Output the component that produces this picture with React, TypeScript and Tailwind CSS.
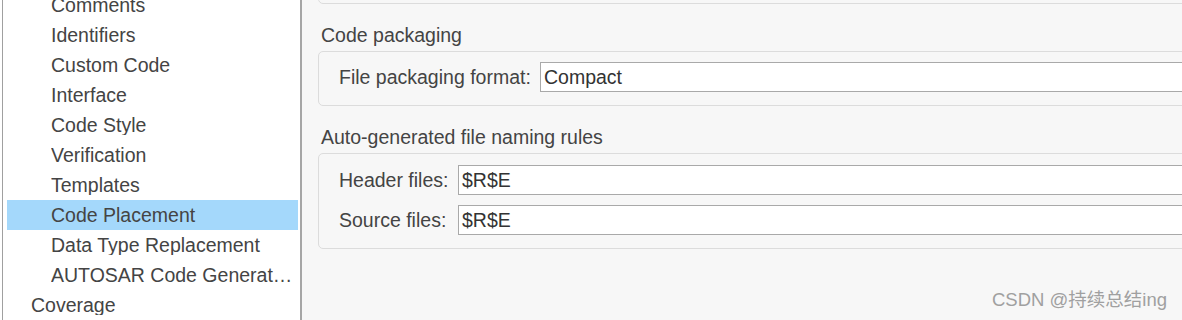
const TREE: { label: string; depth: number; selected?: boolean }[] = [
  { label: "Comments", depth: 1 },
  { label: "Identifiers", depth: 1 },
  { label: "Custom Code", depth: 1 },
  { label: "Interface", depth: 1 },
  { label: "Code Style", depth: 1 },
  { label: "Verification", depth: 1 },
  { label: "Templates", depth: 1 },
  { label: "Code Placement", depth: 1, selected: true },
  { label: "Data Type Replacement", depth: 1 },
  { label: "AUTOSAR Code Generation Options", depth: 1 },
  { label: "Coverage", depth: 0 },
];

function Field({ label, value, labelWidth }: { label: string; value: string; labelWidth: string }) {
  return (
    <div className="flex items-center h-[30px]">
      <span className={`${labelWidth} shrink-0 pl-[20px] text-[#444]`}>{label}</span>
      <div className="flex-1 h-[30px] bg-white border border-[#a9a9a9] flex items-center pl-[3px] text-[#333]">
        {value}
      </div>
    </div>
  );
}

export default function App() {
  return (
    <div
      className="w-[1182px] h-[320px] overflow-hidden flex bg-white text-[19.5px] leading-[20px]"
      style={{ fontFamily: '"Liberation Sans", Arial, sans-serif' }}
    >
      {/* left tree */}
      <div className="w-[302px] shrink-0 h-full flex bg-white">
        <div className="w-[2px] shrink-0" />
        <div className="w-[1px] shrink-0 bg-[#a0a0a0]" />
        <div className="flex-1 pl-[4px] pr-[2px] overflow-hidden">
          <ul className="-mt-[10px]">
            {TREE.map((item) => (
              <li
                key={item.label}
                className={`h-[30px] flex items-center text-[#444] ${
                  item.depth === 0 ? "pl-[24px]" : "pl-[44px]"
                } ${item.selected ? "bg-[#a4d8fb]" : ""}`}
              >
                <span className="truncate pr-[3px]">{item.label}</span>
              </li>
            ))}
          </ul>
        </div>
        <div className="w-[2px] shrink-0 bg-[#a6a6a6]" />
      </div>

      {/* right settings */}
      <div className="flex-1 bg-[#f7f7f7] pl-[16px] relative overflow-hidden">
        <div className="w-[1000px]">
          <div className="h-[18px] -mt-[14px] border border-[#dcdcdc] rounded-[5px]" />
          <div className="pl-[3px] h-[47px] pt-[21px] text-[#444]">Code packaging</div>
          <div className="h-[55px] border border-[#dcdcdc] rounded-[5px] pt-[10px]">
            <Field label="File packaging format:" value="Compact" labelWidth="w-[221px]" />
          </div>
          <div className="pl-[3px] h-[47px] pt-[21px] text-[#444]">Auto-generated file naming rules</div>
          <div className="h-[96px] border border-[#dcdcdc] rounded-[5px] pt-[11px] flex flex-col gap-[10px]">
            <Field label="Header files:" value="$R$E" labelWidth="w-[139px]" />
            <Field label="Source files:" value="$R$E" labelWidth="w-[139px]" />
          </div>
        </div>
        <div
          className="absolute right-[15px] bottom-[10px] text-[18.5px] text-[#a0a0a0]"
          style={{ fontFamily: '"Liberation Sans", "Noto Sans CJK SC", sans-serif' }}
        >
          CSDN @持续总结ing
        </div>
      </div>
    </div>
  );
}
